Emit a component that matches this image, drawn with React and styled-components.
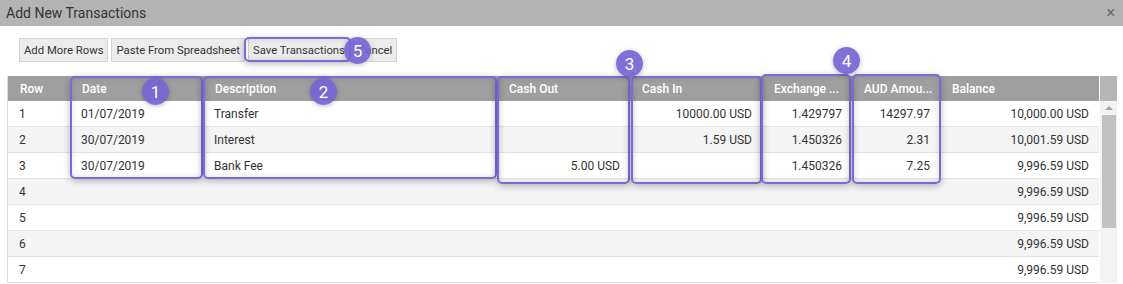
import React from 'react';
import styled, { createGlobalStyle } from 'styled-components';

const GlobalStyle = createGlobalStyle`
  html, body {
    margin: 0;
    padding: 0;
    background: #ffffff;
  }
  body {
    font-family: Roboto, "Liberation Sans", sans-serif;
    color: #333333;
  }
`;

const COLS = '62px 133px 294px 133px 132px 90px 88px 159px';

const Dialog = styled.div`
  position: relative;
  width: 1123px;
  height: 284px;
  overflow: hidden;
  background: #ffffff;
`;

const TitleBar = styled.div`
  height: 26px;
  background: #b3b3b3;
  display: flex;
  align-items: center;
  justify-content: space-between;
  padding: 0 8px 0 6px;
`;

const Title = styled.h1`
  margin: 0;
  font-size: 14px;
  font-weight: 400;
  color: #333333;
`;

const CloseButton = styled.span`
  font-size: 16px;
  color: #6a6a6a;
  line-height: 1;
`;

const Toolbar = styled.div`
  display: flex;
  gap: 3px;
  padding: 12px 19px 14px;
`;

const Button = styled.button`
  height: 24px;
  padding: 0 4px;
  border: 1px solid #d4d4d4;
  background: #ececec;
  font-family: Roboto, "Liberation Sans", sans-serif;
  font-size: 11.3px;
  color: #333333;
  cursor: pointer;
`;

const Table = styled.div`
  display: flex;
  margin-left: 7px;
  width: 1110px;
  border-left: 1px solid #dedede;
`;

const Grid = styled.div`
  display: grid;
  grid-template-columns: ${COLS};
  grid-auto-rows: 26px;
  grid-template-rows: 25px;
`;

const HeadCell = styled.div`
  background: #9f9f9f;
  color: #ffffff;
  font-size: 12px;
  font-weight: 500;
  display: flex;
  align-items: center;
  padding: 0 10px 0 11px;
  border-left: 1px solid ${(p) => (p.$first ? 'transparent' : '#a9a9a9')};
  white-space: nowrap;
  overflow: hidden;
`;

const Cell = styled.div`
  background: ${(p) => (p.$odd ? '#f4f4f4' : '#ffffff')};
  border-bottom: 1px solid #e3e3e3;
  font-size: 12px;
  color: #333333;
  display: flex;
  align-items: center;
  justify-content: ${(p) => (p.$right ? 'flex-end' : 'flex-start')};
  padding: 0 10px 0 11px;
  white-space: nowrap;
`;

const Scrollbar = styled.div`
  margin-left: 1px;
  width: 17px;
  display: flex;
  flex-direction: column;
`;

const ScrollHead = styled.div`
  height: 25px;
  background: #b5b5b5;
`;

const ScrollTrack = styled.div`
  flex: 1;
  background: #f3f3f3;
  display: flex;
  flex-direction: column;
  align-items: center;
  padding-top: 5px;
  gap: 5px;
`;

const ArrowUp = styled.div`
  width: 0;
  height: 0;
  border-left: 4px solid transparent;
  border-right: 4px solid transparent;
  border-bottom: 4px solid #a3a3a3;
`;

const Thumb = styled.div`
  width: 14px;
  height: 113px;
  background: #c1c1c1;
`;

const Highlight = styled.div`
  position: absolute;
  border: 2px solid #7b69d9;
  border-radius: 5px;
  box-shadow: 0 2px 7px rgba(0, 0, 0, 0.28), inset 0 0 6px rgba(0, 0, 0, 0.12);
  pointer-events: none;
`;

const Badge = styled.div`
  position: absolute;
  width: 27px;
  height: 27px;
  margin: -14px 0 0 -14px;
  border-radius: 50%;
  background: rgba(118, 100, 212, 0.92);
  box-shadow: 0 1px 5px rgba(0, 0, 0, 0.25);
  color: #ffffff;
  font-size: 17px;
  display: flex;
  align-items: center;
  justify-content: center;
`;

const headers = ['Row', 'Date', 'Description', 'Cash Out', 'Cash In', 'Exchange ...', 'AUD Amou...', 'Balance'];
const rightCols = [3, 4, 5, 6, 7];

const rows = [
  ['1', '01/07/2019', 'Transfer', '', '10000.00 USD', '1.429797', '14297.97', '10,000.00 USD'],
  ['2', '30/07/2019', 'Interest', '', '1.59 USD', '1.450326', '2.31', '10,001.59 USD'],
  ['3', '30/07/2019', 'Bank Fee', '5.00 USD', '', '1.450326', '7.25', '9,996.59 USD'],
  ['4', '', '', '', '', '', '', '9,996.59 USD'],
  ['5', '', '', '', '', '', '', '9,996.59 USD'],
  ['6', '', '', '', '', '', '', '9,996.59 USD'],
  ['7', '', '', '', '', '', '', '9,996.59 USD'],
];

const boxes = [
  { left: 70, top: 76, width: 133, height: 103 },
  { left: 203, top: 76, width: 294, height: 103 },
  { left: 497, top: 76, width: 133, height: 108 },
  { left: 631, top: 76, width: 131, height: 108 },
  { left: 761, top: 74, width: 90, height: 110 },
  { left: 852, top: 74, width: 89, height: 110 },
  { left: 244, top: 37, width: 107, height: 25 },
];

const badges = [
  { n: 1, x: 156, y: 92 },
  { n: 2, x: 324, y: 92 },
  { n: 3, x: 630, y: 64 },
  { n: 4, x: 847, y: 61 },
  { n: 5, x: 358, y: 51 },
];

export default function App() {
  return (
    <Dialog>
      <GlobalStyle />
      <TitleBar>
        <Title>Add New Transactions</Title>
        <CloseButton>×</CloseButton>
      </TitleBar>
      <Toolbar>
        <Button>Add More Rows</Button>
        <Button>Paste From Spreadsheet</Button>
        <Button>Save Transactions</Button>
        <Button>Cancel</Button>
      </Toolbar>
      <Table>
        <Grid>
          {headers.map((h, i) => (
            <HeadCell key={h} $first={i === 0}>{h}</HeadCell>
          ))}
          {rows.map((r, ri) =>
            r.map((v, ci) => (
              <Cell key={`${ri}-${ci}`} $odd={ri % 2 === 1} $right={rightCols.includes(ci)}>
                {v}
              </Cell>
            ))
          )}
        </Grid>
        <Scrollbar>
          <ScrollHead />
          <ScrollTrack>
            <ArrowUp />
            <Thumb />
          </ScrollTrack>
        </Scrollbar>
      </Table>
      {boxes.map((b, i) => (
        <Highlight key={i} style={{ left: b.left, top: b.top, width: b.width - 4, height: b.height - 4 }} />
      ))}
      {badges.map((b) => (
        <Badge key={b.n} style={{ left: b.x, top: b.y }}>{b.n}</Badge>
      ))}
    </Dialog>
  );
}
